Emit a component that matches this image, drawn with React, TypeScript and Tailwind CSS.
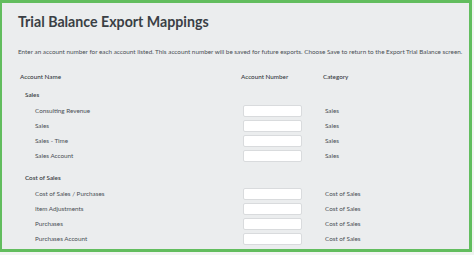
const groups = [
  {
    name: "Sales",
    accounts: ["Consulting Revenue", "Sales", "Sales - Time", "Sales Account"],
    category: "Sales",
  },
  {
    name: "Cost of Sales",
    accounts: ["Cost of Sales / Purchases", "Item Adjustments", "Purchases", "Purchases Account"],
    category: "Cost of Sales",
  },
];

export default function App() {
  return (
    <div className="w-[474px] h-[255px] bg-[#f2f4f2] font-['Lato','Liberation_Sans',sans-serif] overflow-hidden">
      <div className="w-[472px] h-[252px] bg-[#ebedee] border-t-[3px] border-l-2 border-r-[3px] border-b-[3px] border-[#62bd5e] pl-4 pr-2">
        {/* title */}
        <h1 className="mt-[8px] text-[14.2px] leading-[22px] font-bold text-[#3a3f45]">
          Trial Balance Export Mappings
        </h1>
        <p className="mt-[14px] text-[6.35px] leading-[10px] text-[#4a4f55] whitespace-nowrap">
          Enter an account number for each account listed. This account number will be saved for future exports.
          Choose Save to return to the Export Trial Balance screen.
        </p>

        {/* column headers */}
        <div className="mt-[15px] grid grid-cols-[223px_82px_1fr] text-[6.3px] leading-[10px] text-[#33383d] font-medium">
          <div className="pl-[2px]">Account Name</div>
          <div>Account Number</div>
          <div>Category</div>
        </div>

        {groups.map((g, gi) => (
          <div key={g.name} className={gi === 0 ? "mt-[7px]" : "mt-[10px]"}>
            <div className="pl-[7px] h-[12px] text-[6.3px] leading-[12px] font-semibold text-[#3a3f45]">{g.name}</div>
            <div className="mt-[4px] flex flex-col gap-[3px]">
              {g.accounts.map((a) => (
                <div key={a} className="grid grid-cols-[225px_82px_1fr] items-center h-[12px]">
                  <div className="pl-[17px] text-[6.3px] text-[#4a4f55]">{a}</div>
                  <input
                    type="text"
                    className="w-[59px] h-[12px] bg-white border border-[#d9dbdd] rounded-[2px] outline-none"
                  />
                  <div className="text-[6.3px] text-[#4a4f55]">{g.category}</div>
                </div>
              ))}
            </div>
          </div>
        ))}
      </div>
    </div>
  );
}
